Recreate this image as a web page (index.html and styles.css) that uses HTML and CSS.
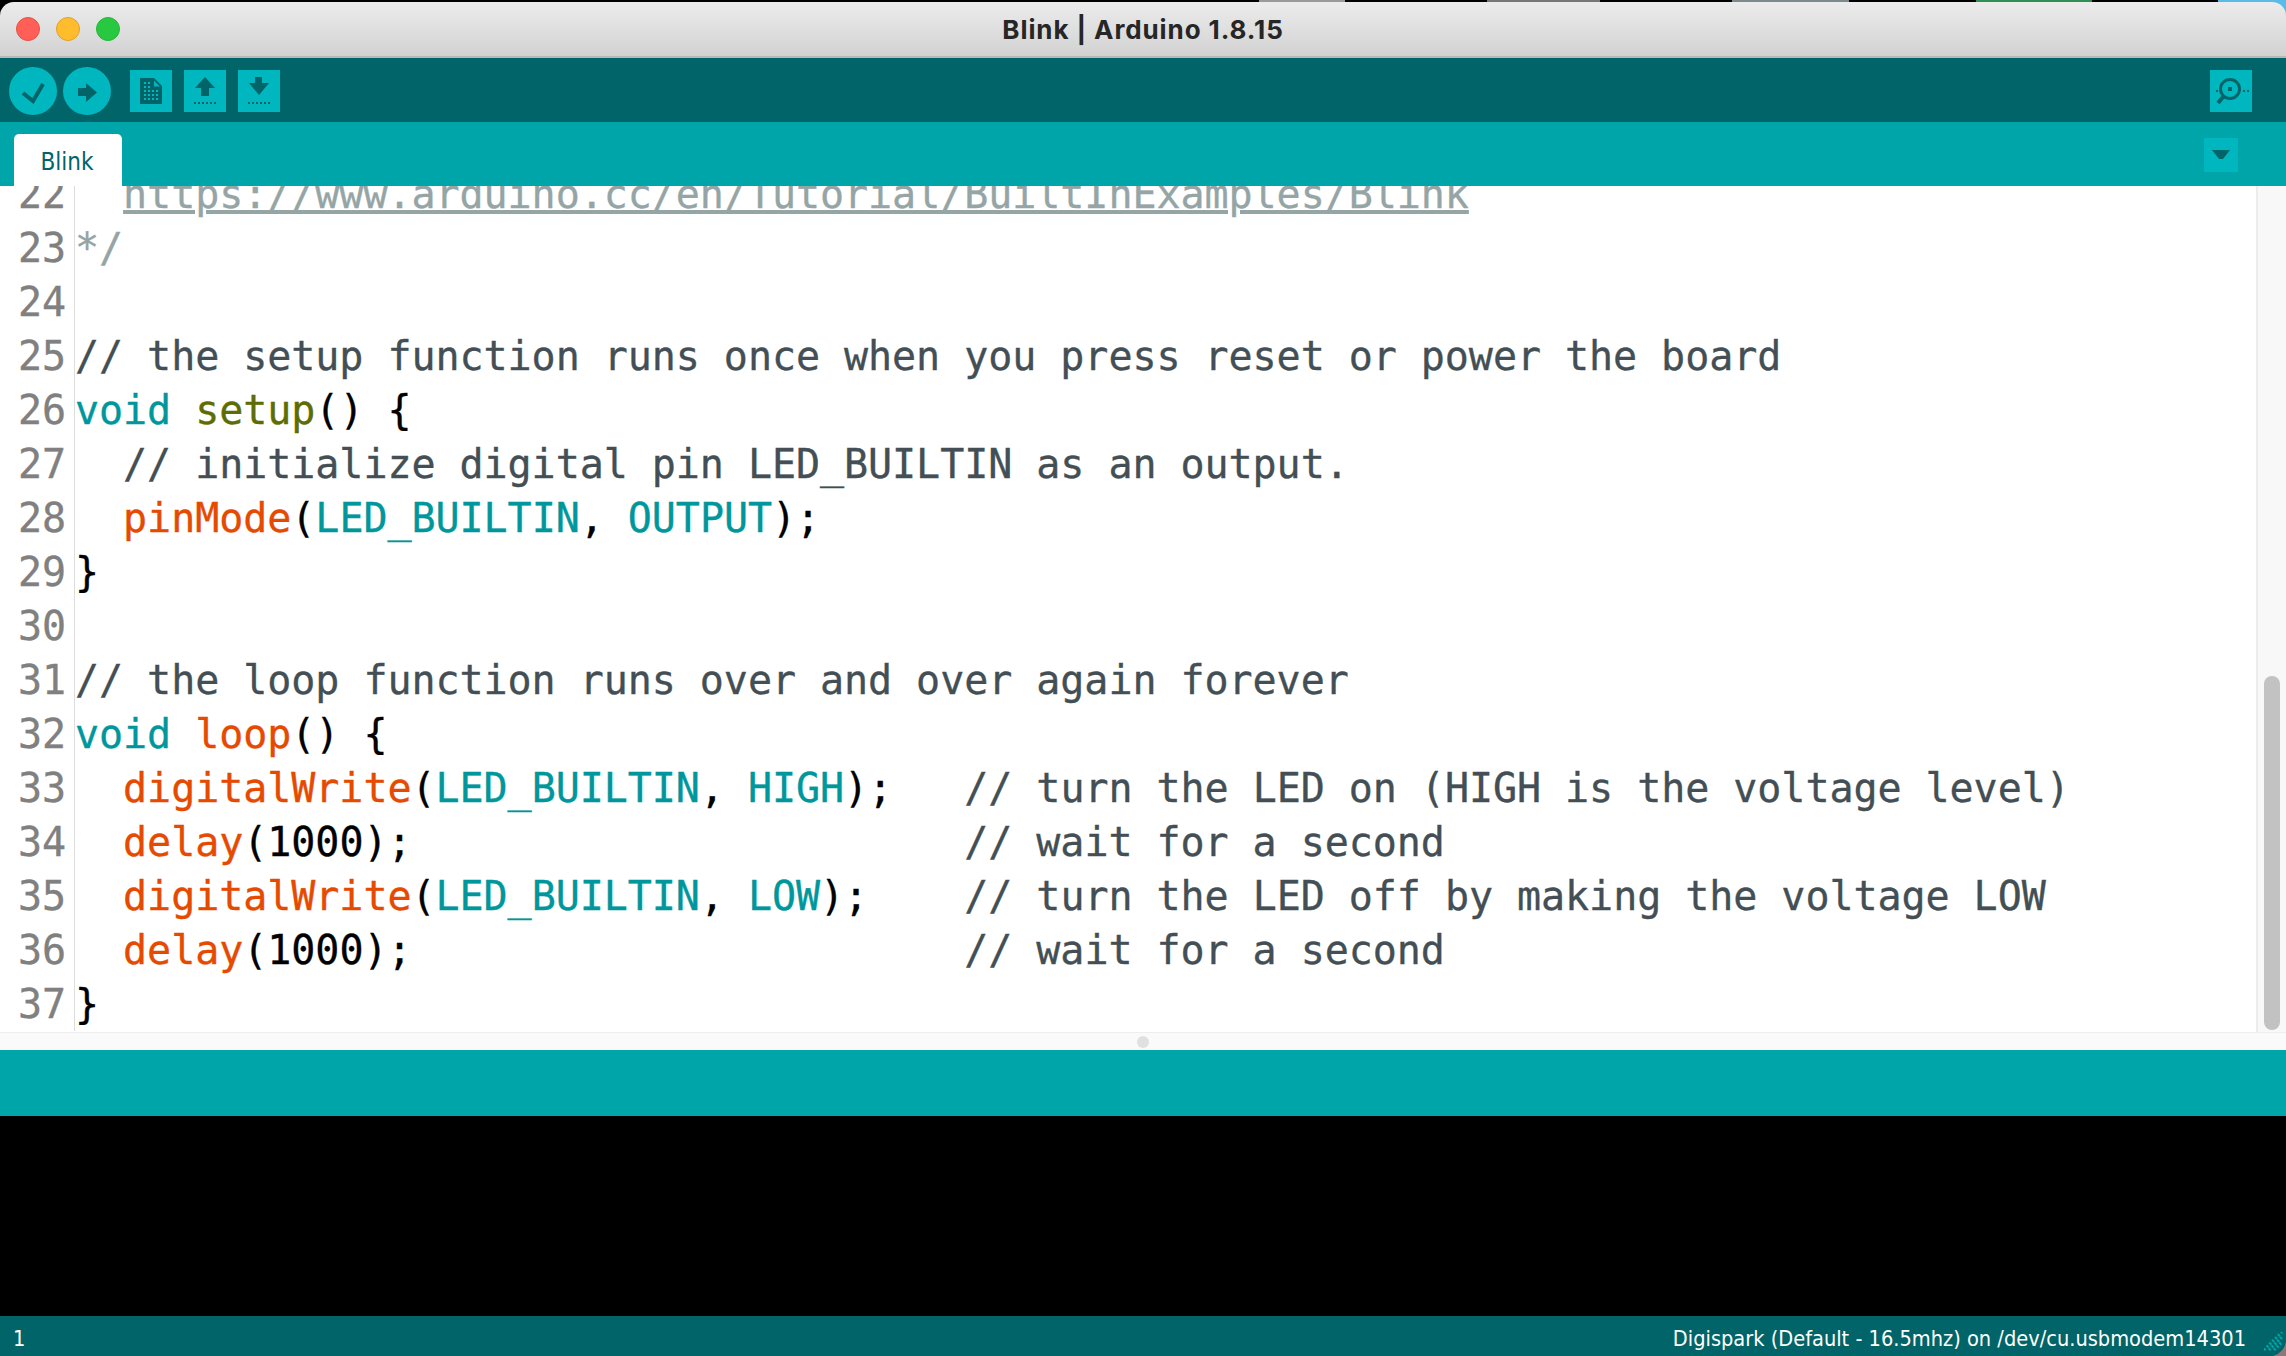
FILE: index.html
```html
<!DOCTYPE html>
<html lang="en">
<head>
<meta charset="utf-8">
<title>Blink | Arduino 1.8.15</title>
<link rel="stylesheet" href="styles.css">
</head>
<body>
<div class="window">
  <header class="titlebar">
    <div class="lights">
      <span class="light red"></span>
      <span class="light yellow"></span>
      <span class="light green"></span>
    </div>
    <div class="title">Blink | Arduino 1.8.15</div>
    <div></div>
  </header>

  <nav class="toolbar">
    <div class="tools">
      <button class="round" aria-label="Verify">
        <svg width="48" height="48" viewBox="0 0 48 48"><path d="M14 26l10 8 10-17" fill="none" stroke="#006468" stroke-width="4"/></svg>
      </button>
      <button class="round" aria-label="Upload">
        <svg width="48" height="48" viewBox="0 0 48 48"><path d="M15 21h8v-5l11 9.500-11 9.500v-6h-8z" fill="#006468"/></svg>
      </button>
      <button class="square first" aria-label="New">
        <svg width="42" height="42" viewBox="0 0 42 42"><path d="M10 8h14l8 8v18H10z" fill="#006468"/><path d="M24 10.500l6 6h-6z" fill="#00b7bf"/><g fill="#00b7bf"><rect x="14" y="12" width="2" height="2"/><rect x="18" y="12" width="2" height="2"/><rect x="14" y="16" width="2" height="2"/><rect x="18" y="16" width="2" height="2"/><rect x="14" y="20" width="2" height="2"/><rect x="18" y="20" width="2" height="2"/><rect x="22" y="20" width="2" height="2"/><rect x="26" y="20" width="2" height="2"/><rect x="14" y="24" width="2" height="2"/><rect x="18" y="24" width="2" height="2"/><rect x="22" y="24" width="2" height="2"/><rect x="26" y="24" width="2" height="2"/><rect x="14" y="28" width="2" height="2"/><rect x="18" y="28" width="2" height="2"/><rect x="22" y="28" width="2" height="2"/><rect x="26" y="28" width="2" height="2"/></g></svg>
      </button>
      <button class="square" aria-label="Open">
        <svg width="42" height="42" viewBox="0 0 42 42"><path d="M21 7l10 11h-6v8h-8v-8h-6z" fill="#006468"/><path d="M10 33h23" stroke="#006468" stroke-width="2" stroke-dasharray="2 2"/></svg>
      </button>
      <button class="square" aria-label="Save">
        <svg width="42" height="42" viewBox="0 0 42 42"><path d="M17 7h7v6h7L21 25 11 13h6z" fill="#006468"/><path d="M10 33h23" stroke="#006468" stroke-width="2" stroke-dasharray="2 2"/></svg>
      </button>
    </div>
    <button class="square" aria-label="Serial Monitor">
      <svg width="42" height="42" viewBox="0 0 42 42"><circle cx="20" cy="19" r="9.500" fill="none" stroke="#006468" stroke-width="3"/><rect x="18" y="17" width="4" height="4" fill="#006468"/><path d="M13 27l-5 6" stroke="#006468" stroke-width="4"/><path d="M33 21h2M37 21h2M6 21h2" stroke="#006468" stroke-width="2"/></svg>
    </button>
  </nav>

  <div class="tabs">
    <div class="tab">Blink</div>
    <button class="menu" aria-label="Tab menu">
      <svg width="34" height="34" viewBox="0 0 34 34"><path d="M8 12h18l-7 9h-4z" fill="#006468"/></svg>
    </button>
  </div>

  <main class="editor">
    <div class="code-pane">
      <div class="code">
<div class="line"><span class="num">22</span><span class="src c-block">  <u>https://www.arduino.cc/en/Tutorial/BuiltInExamples/Blink</u></span></div>
<div class="line"><span class="num">23</span><span class="src c-block">*/</span></div>
<div class="line"><span class="num">24</span><span class="src"></span></div>
<div class="line"><span class="num">25</span><span class="src c-line">// the setup function runs once when you press reset or power the board</span></div>
<div class="line"><span class="num">26</span><span class="src"><span class="kw">void</span> <span class="fn2">setup</span>() {</span></div>
<div class="line"><span class="num">27</span><span class="src c-line">  // initialize digital pin LED_BUILTIN as an output.</span></div>
<div class="line"><span class="num">28</span><span class="src">  <span class="fn">pinMode</span>(<span class="kw">LED_BUILTIN</span>, <span class="kw">OUTPUT</span>);</span></div>
<div class="line"><span class="num">29</span><span class="src">}</span></div>
<div class="line"><span class="num">30</span><span class="src"></span></div>
<div class="line"><span class="num">31</span><span class="src c-line">// the loop function runs over and over again forever</span></div>
<div class="line"><span class="num">32</span><span class="src"><span class="kw">void</span> <span class="fn">loop</span>() {</span></div>
<div class="line"><span class="num">33</span><span class="src">  <span class="fn">digitalWrite</span>(<span class="kw">LED_BUILTIN</span>, <span class="kw">HIGH</span>);   <span class="c-line">// turn the LED on (HIGH is the voltage level)</span></span></div>
<div class="line"><span class="num">34</span><span class="src">  <span class="fn">delay</span>(1000);                       <span class="c-line">// wait for a second</span></span></div>
<div class="line"><span class="num">35</span><span class="src">  <span class="fn">digitalWrite</span>(<span class="kw">LED_BUILTIN</span>, <span class="kw">LOW</span>);    <span class="c-line">// turn the LED off by making the voltage LOW</span></span></div>
<div class="line"><span class="num">36</span><span class="src">  <span class="fn">delay</span>(1000);                       <span class="c-line">// wait for a second</span></span></div>
<div class="line"><span class="num">37</span><span class="src">}</span></div>
      </div>
      <div class="scrollbar"><div class="thumb"></div></div>
    </div>
    <div class="splitter"><span class="dot"></span></div>
  </main>

  <div class="message"></div>
  <div class="console"></div>

  <footer class="status">
    <span class="line-no">1</span>
    <span class="board">Digispark (Default - 16.5mhz) on /dev/cu.usbmodem14301</span>
    <svg class="grip" width="22" height="24" viewBox="0 0 22 24"><path d="M22 9Q21 20 9 24H22z" fill="#8c7878"/><path d="M0 18L18 0M5 18L18 5M10 18L18 10" stroke="#00a5a9" stroke-width="3" stroke-dasharray="2 2"/></svg>
  </footer>
</div>
</body>
</html>
```
FILE: styles.css
```css
* { box-sizing: border-box; }
html, body { margin: 0; height: 100%; }
body {
  background: linear-gradient(90deg,
    #000 0, #000 1259px, #9a9a9a 1259px, #9a9a9a 1345px,
    #000 1345px, #000 1487px, #777 1487px, #777 1600px,
    #000 1600px, #000 1732px, #7f8a8c 1732px, #7f8a8c 1849px,
    #000 1849px, #000 1976px, #2f8f55 1976px, #2f8f55 2092px,
    #000 2092px, #000 2218px, #5bbbe8 2218px, #5bbbe8 100%);
  overflow: hidden;
}
button { border: 0; padding: 0; margin: 0; display: block; }
svg { display: block; }

.window {
  height: 100vh;
  padding-top: 2px;
  display: flex;
  flex-direction: column;
}

.titlebar {
  flex: 0 0 56px;
  display: grid;
  grid-template-columns: 1fr auto 1fr;
  align-items: center;
  background: linear-gradient(#ececec, #d2d2d2);
  border-bottom: 2px solid #b8b8b8;
  border-radius: 14px 14px 0 0;
}
.lights { display: flex; gap: 16px; padding-left: 16px; }
.light { width: 24px; height: 24px; border-radius: 50%; border: 1px solid rgba(0,0,0,.12); }
.red { background: #ff5f57; border-color: #e5533f; }
.yellow { background: #ffbd2e; border-color: #e39f27; }
.green { background: #28c940; border-color: #27b53a; }
.title {
  font: 700 26px "Inter", "Liberation Sans", sans-serif;
  letter-spacing: 0.9px;
  color: #262626;
}

.toolbar {
  flex: 0 0 64px;
  background: #006468;
  display: flex;
  justify-content: space-between;
  align-items: center;
  padding: 2px 34px 0 9px;
}
.tools { display: flex; align-items: center; gap: 12px; }
.round { width: 48px; height: 48px; border-radius: 50%; background: #00b7bf; }
.round + .round { margin-left: -6px; }
.square { width: 42px; height: 42px; background: #00b7bf; }
.first { margin-left: 7px; }

.tabs {
  flex: 0 0 64px;
  background: #00a5a9;
  display: flex;
  justify-content: space-between;
  align-items: flex-end;
  padding: 0 48px 0 14px;
}
.tab {
  width: 108px;
  height: 52px;
  padding-right: 2px;
  background: #fff;
  border-radius: 5px 5px 0 0;
  color: #006468;
  font: 24px/56px "DejaVu Sans Condensed", "DejaVu Sans", sans-serif;
  text-align: center;
}
.menu { width: 34px; height: 34px; background: #00b7bf; margin-bottom: 14px; }

.editor {
  flex: 0 0 864px;
  display: flex;
  flex-direction: column;
  background: #fff;
  min-height: 0;
}
.code-pane { flex: 1; display: flex; min-height: 0; overflow: hidden; }
.code {
  flex: 1;
  margin-top: -19px;
  font: 40px/54px "DejaVu Sans Mono", monospace;
  letter-spacing: -0.05px;
  -webkit-text-stroke: 0.35px;
  color: #000;
}
.line { display: flex; height: 54px; }
.num {
  flex: 0 0 75px;
  padding-right: 8px;
  text-align: right;
  color: #808080;
  border-right: 1px solid #ddd;
}
.src { white-space: pre; }
.c-block { color: #95a5a6; }
.c-line { color: #434f54; }
.kw { color: #00979c; }
.fn { color: #e64a00; }
.fn2 { color: #5e6d03; }

.scrollbar {
  flex: 0 0 30px;
  background: #f8f8f8;
  border-left: 2px solid #ececec;
  display: flex;
  flex-direction: column;
  justify-content: flex-end;
  padding: 0 6px 2px 6px;
}
.thumb { height: 354px; background: #c2c2c2; border-radius: 8px; }

.splitter {
  flex: 0 0 18px;
  background: #fafafa;
  border-top: 1px solid #eee;
  display: flex;
  align-items: center;
  justify-content: center;
}
.dot { width: 12px; height: 12px; border-radius: 50%; background: #e0e0e0; }

.message { flex: 0 0 66px; background: #00a5a9; }
.console { flex: 0 0 200px; background: #000; }

.status {
  flex: 0 0 40px;
  background: #006468;
  color: #fff;
  font: 21.600px "DejaVu Sans Condensed", "DejaVu Sans", sans-serif;
  display: flex;
  align-items: center;
  padding: 4px 0 0 13px;
}
.line-no { flex: 1; }
.board { margin-right: 18px; }
.grip { align-self: flex-end; }
```
